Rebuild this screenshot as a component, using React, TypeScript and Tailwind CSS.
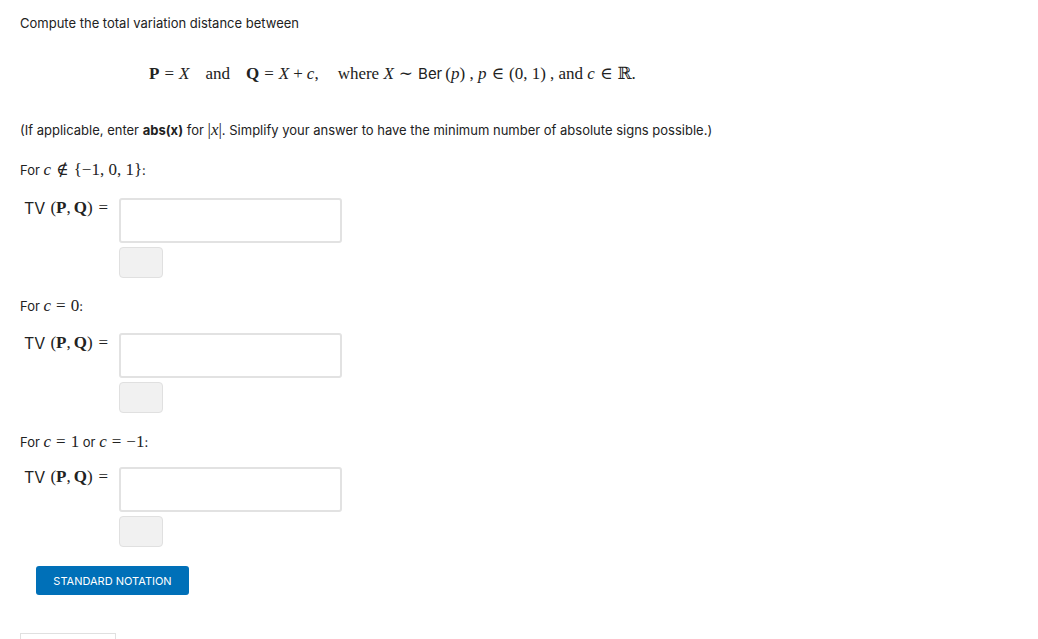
import React from "react";

const serif = "font-['Liberation_Serif','DejaVu_Serif',serif]";

function M({ children, className = "" }: { children: React.ReactNode; className?: string }) {
  return <span className={`${serif} text-[17px] ${className}`}>{children}</span>;
}
function I({ children }: { children: React.ReactNode }) {
  return <span className="italic">{children}</span>;
}
function B({ children }: { children: React.ReactNode }) {
  return <span className="font-bold">{children}</span>;
}
function Op({ children }: { children: React.ReactNode }) {
  return <span className="mx-[5px]">{children}</span>;
}
function Bin({ children }: { children: React.ReactNode }) {
  return <span className="mx-[4px]">{children}</span>;
}

function Answer({ mt }: { mt: string }) {
  return (
    <div className={`flex items-start ${mt}`}>
      <div className="pl-[4px] w-[99px] flex items-center h-[20px] whitespace-nowrap">
        <span className="font-['Inter',sans-serif] text-[16px]">TV</span>
        <M className="ml-[5px]">
          (<B>P</B>,<span className="ml-[3px]" />
          <B>Q</B>)<span className="ml-[6px]">=</span>
        </M>
      </div>
      <div className="flex flex-col gap-[4px]">
        <div className="w-[223px] h-[45px] border-2 border-[#e2e2e2] rounded-[3px] bg-white" />
        <div className="w-[44px] h-[31px] border border-[#e0e0e0] rounded-[4px] bg-[#f1f1f1]" />
      </div>
    </div>
  );
}

export default function App() {
  return (
    <div className="min-h-[639px] bg-white px-5 pt-[15px] font-['Inter',sans-serif] text-[13px] text-[#222] leading-[16px] overflow-hidden">
      <p>Compute the total variation distance between</p>
      <div className="w-[745px] mt-[33px] h-[20px] flex items-center justify-center whitespace-nowrap">
        <M>
          <B>P</B>
          <Op>=</Op>
          <I>X</I>
          <span className="ml-[16px] mr-[16px]">and</span>
          <B>Q</B>
          <Op>=</Op>
          <I>X</I>
          <Bin>+</Bin>
          <I>c</I>,<span className="ml-[19px]">where </span>
          <I>X</I>
          <Op>∼</Op>
          <span className="font-['Inter',sans-serif] text-[15px]">Ber</span>
          <span className="ml-[3px]">(<I>p</I>)</span> , <I>p</I>
          <Op>∈</Op>(0, 1) , and <I>c</I>
          <Op>∈</Op>ℝ.
        </M>
      </div>
      <p className="mt-[38px]">
        (If applicable, enter <span className="font-bold">abs(x)</span> for{" "}
        <M>
          |<I>x</I>|
        </M>
        . Simplify your answer to have the minimum number of absolute signs possible.)
      </p>

      <p className="mt-[24px] flex items-center h-[16px]">
        For&nbsp;
        <M>
          <I>c</I>
          <Op>∉</Op>
          {"{"}−1, 0, 1{"}"}
        </M>
        :
      </p>
      <Answer mt="mt-[20px]" />

      <p className="mt-[20px] flex items-center h-[16px]">
        For&nbsp;
        <M>
          <I>c</I>
          <Op>=</Op>0
        </M>
        :
      </p>
      <Answer mt="mt-[19px]" />

      <p className="mt-[21px] flex items-center h-[16px]">
        For&nbsp;
        <M>
          <I>c</I>
          <Op>=</Op>1
        </M>
        &nbsp;or&nbsp;
        <M>
          <I>c</I>
          <Op>=</Op>−1
        </M>
        :
      </p>
      <Answer mt="mt-[17px]" />

      <button className="mt-[19px] ml-[16px] w-[153px] h-[29px] bg-[#0070b8] rounded-[3px] text-white text-[11px] flex items-center justify-center">
        STANDARD NOTATION
      </button>
      <div className="mt-[38px] w-[96px] h-[10px] border-t border-x border-[#e0e0e0]" />
    </div>
  );
}
